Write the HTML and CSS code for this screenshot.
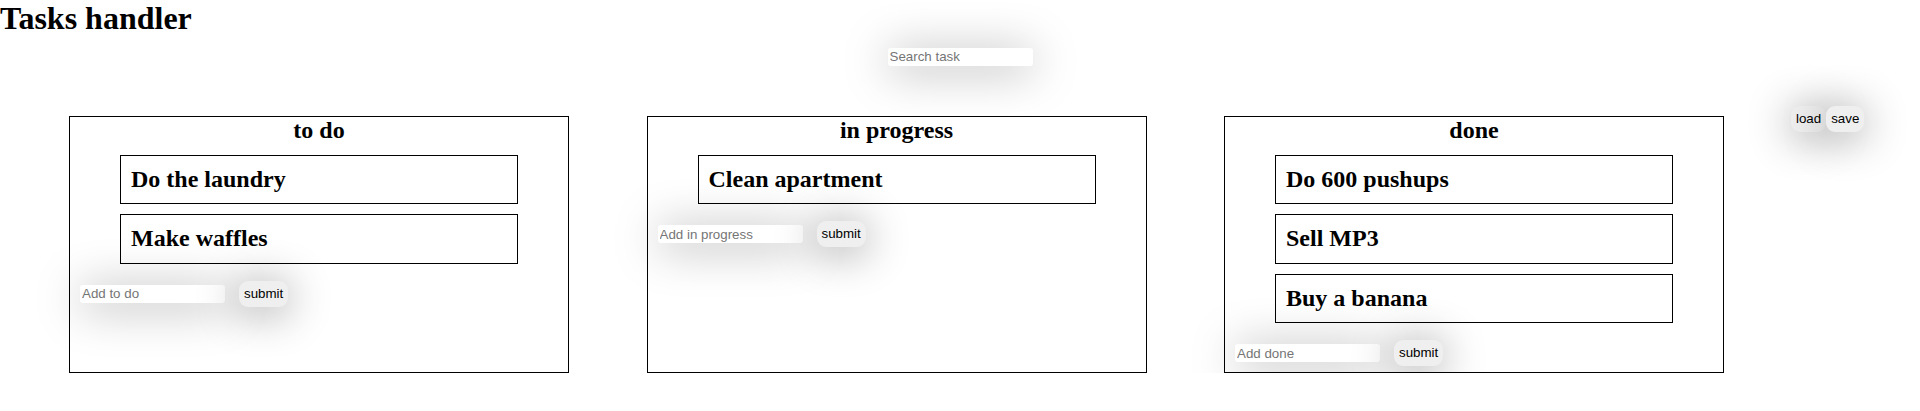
FILE: index.html
```html
<!DOCTYPE html>
<html lang="en">
<head>
<meta charset="utf-8">
<title>Tasks handler</title>
<link rel="stylesheet" href="styles.css">
</head>
<body>
<h1 class="title">Tasks handler</h1>
<div class="search">
  <input class="field" type="text" placeholder="Search task">
</div>
<div class="board">
  <section class="column">
    <h2 class="column-title">to do</h2>
    <div class="card"><h2 class="card-text">Do the laundry</h2></div>
    <div class="card"><h2 class="card-text">Make waffles</h2></div>
    <form class="add-form">
      <input class="field" type="text" placeholder="Add to do">
      <button class="btn" type="button">submit</button>
    </form>
  </section>
  <section class="column">
    <h2 class="column-title">in progress</h2>
    <div class="card"><h2 class="card-text">Clean apartment</h2></div>
    <form class="add-form">
      <input class="field" type="text" placeholder="Add in progress">
      <button class="btn" type="button">submit</button>
    </form>
  </section>
  <section class="column">
    <h2 class="column-title">done</h2>
    <div class="card"><h2 class="card-text">Do 600 pushups</h2></div>
    <div class="card"><h2 class="card-text">Sell MP3</h2></div>
    <div class="card"><h2 class="card-text">Buy a banana</h2></div>
    <form class="add-form">
      <input class="field" type="text" placeholder="Add done">
      <button class="btn" type="button">submit</button>
    </form>
  </section>
  <div class="actions">
    <button class="btn" type="button">load</button>
    <button class="btn" type="button">save</button>
  </div>
</div>
</body>
</html>
```
FILE: styles.css
```css
body {
  margin: 0;
  background: #fff;
  color: #000;
  font-family: "Liberation Serif", "Times New Roman", serif;
  line-height: 1.15;
}

.title {
  margin: 0;
  font-size: 32px;
  font-weight: bold;
  line-height: 36.8px;
}

.search {
  display: flex;
  justify-content: center;
  padding: 11px 0 40px;
}

.field {
  box-sizing: border-box;
  width: 145px;
  height: 18px;
  padding: 0 2px;
  border: none;
  border-radius: 3px;
  background: #fff;
  font: 13.33px "Liberation Sans", Arial, sans-serif;
  color: #000;
  outline: none;
  box-shadow: 0 4px 46px rgba(0, 0, 0, 0.36);
}

.field::placeholder {
  color: #757575;
}

.board {
  display: flex;
  align-items: stretch;
  padding-left: 69px;
}

.column {
  box-sizing: border-box;
  width: 500px;
  margin-top: 10.3px;
  border: 1px solid #000;
}

.column + .column {
  margin-left: 77.5px;
}

.column-title {
  margin: 0;
  font-size: 24px;
  font-weight: bold;
  line-height: 27.6px;
  text-align: center;
}

.card {
  box-sizing: border-box;
  width: 398px;
  margin: 10px auto;
  padding: 10px;
  border: 1px solid #000;
}

.card-text {
  margin: 0;
  font-size: 24px;
  font-weight: bold;
  line-height: 27.6px;
}

.add-form {
  display: flex;
  align-items: center;
  gap: 14px;
  margin: 0;
  padding: 7px 10px 6px;
}

.btn {
  box-sizing: border-box;
  height: 26px;
  padding: 0 5px;
  border: none;
  border-radius: 9px;
  background-color: #efefef;
  color: #000;
  font: 13.33px/16px "Liberation Sans", Arial, sans-serif;
  box-shadow: 0 4px 44px rgba(0, 0, 0, 0.45);
  cursor: pointer;
}

.actions {
  display: flex;
  align-self: flex-start;
  margin-left: 67px;
}
```
